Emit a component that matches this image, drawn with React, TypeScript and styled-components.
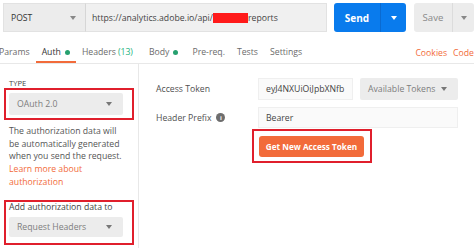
import styled, { createGlobalStyle } from 'styled-components';

const Global = createGlobalStyle`
  html, body {
    margin: 0;
    padding: 0;
    background: #fff;
  }
  * {
    box-sizing: border-box;
  }
`;

const Page = styled.div`
  width: 474px;
  height: 248px;
  overflow: hidden;
  font-family: 'Open Sans', 'Noto Sans', sans-serif;
  font-size: 8.7px;
  color: #505050;
  background: #fff;
`;

const TopBar = styled.div`
  display: flex;
  align-items: stretch;
  height: 32px;
  padding: 3px 0 0 3px;
`;

const MethodSelect = styled.div`
  width: 83px;
  display: flex;
  align-items: center;
  justify-content: space-between;
  padding: 0 9px 0 7px;
  background: #ececec;
  border: 1px solid #e2e2e2;
  border-right: 1px solid #d6d6d6;
  font-size: 8.6px;
  color: #333;
`;

const UrlInput = styled.div`
  width: 241px;
  display: flex;
  align-items: center;
  padding-left: 6px;
  background: #f0f0f0;
  border: 1px solid #e2e2e2;
  border-left: none;
  color: #444;
  white-space: nowrap;
`;

const Redacted = styled.span`
  display: inline-block;
  width: 35px;
  height: 10px;
  background: #ff1a1a;
`;

const SplitButton = styled.div<{ $primary?: boolean; $w: number; $ml: number }>`
  display: flex;
  width: ${(p) => p.$w}px;
  margin-left: ${(p) => p.$ml}px;
  border-radius: 3px;
  overflow: hidden;
  background: ${(p) => (p.$primary ? '#097bed' : '#ececec')};
  color: ${(p) => (p.$primary ? '#fff' : '#8a8a8a')};
  font-weight: ${(p) => (p.$primary ? 700 : 400)};
  font-size: ${(p) => (p.$primary ? 10 : 9.6)}px;
`;

const SplitMain = styled.div<{ $border: string }>`
  flex: 1;
  display: flex;
  align-items: center;
  justify-content: center;
  border-right: 1px solid ${(p) => p.$border};
`;

const SplitCaret = styled.div<{ $w: number }>`
  width: ${(p) => p.$w}px;
  display: flex;
  align-items: center;
  justify-content: center;
`;

const Caret = styled.span<{ $color?: string }>`
  width: 0;
  height: 0;
  border-left: 3px solid transparent;
  border-right: 3px solid transparent;
  border-top: 4px solid ${(p) => p.$color || '#777'};
`;

const Tabs = styled.div`
  display: flex;
  align-items: stretch;
  height: 32px;
  padding-top: 8px;
  border-bottom: 1px solid #e8e8e8;
  color: #6b6b6b;
`;

const Tab = styled.div<{ $active?: boolean; $ml?: number }>`
  display: flex;
  align-items: center;
  gap: 4px;
  padding: 3px 6px 0;
  margin-left: ${(p) => p.$ml || 0}px;
  border-bottom: 2px solid ${(p) => (p.$active ? '#f26b3a' : 'transparent')};
  color: ${(p) => (p.$active ? '#333' : '#6b6b6b')};
  white-space: nowrap;
`;

const Count = styled.span`
  color: #26b47f;
  margin-left: -2px;
`;

const Dot = styled.span`
  width: 5px;
  height: 5px;
  border-radius: 50%;
  background: #26a06f;
`;

const Spacer = styled.div`
  flex: 1;
`;

const TabLink = styled.div<{ $pr: number }>`
  display: flex;
  align-items: center;
  padding: 3px ${(p) => p.$pr}px 0 0;
  color: #f26b3a;
`;

const Body = styled.div`
  display: flex;
  height: 184px;
`;

const Sidebar = styled.div`
  width: 139px;
  flex-shrink: 0;
  border-right: 1px solid #e8e8e8;
  padding: 15px 0 0 4px;
  display: flex;
  flex-direction: column;
`;

const TypeLabel = styled.div`
  font-size: 7.6px;
  color: #444;
  padding-left: 5px;
  line-height: 8px;
  height: 8px;
`;

const RedBox = styled.div<{ $pad: string; $mt: number }>`
  width: 130px;
  margin-top: ${(p) => p.$mt}px;
  padding: ${(p) => p.$pad};
  border: 2px solid #e01f2c;
`;

const Select = styled.div<{ $w?: number; $h?: number }>`
  width: ${(p) => p.$w || 114}px;
  height: ${(p) => p.$h || 22}px;
  background: #ececec;
  display: flex;
  align-items: center;
  justify-content: space-between;
  padding: 0 11px 0 8px;
  color: #7d7d7d;
  border-radius: 2px;
  white-space: nowrap;
`;

const Description = styled.p`
  margin: 5px 0 0 5px;
  line-height: 12.7px;
  color: #555;
  white-space: nowrap;
`;

const OrangeLink = styled.span`
  color: #f26b3a;
`;

const SmallLabel = styled.div`
  color: #444;
  margin: 0 0 4px 0;
  line-height: 11px;
`;

const Main = styled.div`
  flex: 1;
  padding: 14px 0 0 17px;
  display: grid;
  grid-template-columns: 102px 200px;
  grid-auto-rows: min-content;
  row-gap: 7px;
  align-items: center;
`;

const FieldLabel = styled.div`
  display: flex;
  align-items: center;
  gap: 5px;
  color: #505050;
`;

const InfoIcon = styled.span`
  width: 9px;
  height: 9px;
  border-radius: 50%;
  background: #6e6e6e;
  color: #fff;
  font-size: 6px;
  font-weight: 700;
  display: inline-flex;
  align-items: center;
  justify-content: center;
`;

const FieldRow = styled.div`
  display: flex;
  gap: 7px;
`;

const Input = styled.div<{ $w?: number }>`
  width: ${(p) => (p.$w ? `${p.$w}px` : '100%')};
  height: ${(p) => (p.$w ? 22 : 21)}px;
  border: 1px solid #efefef;
  background: #fafafa;
  display: flex;
  align-items: center;
  padding-left: 7px;
  color: #444;
  overflow: hidden;
  white-space: nowrap;
`;

const ButtonCell = styled.div`
  grid-column: 2;
  margin: -6px 0 0 -6px;
`;

const ButtonFrame = styled.div`
  display: inline-block;
  border: 2px solid #e01f2c;
  padding: 5px 6px 4px 5px;
`;

const OrangeButton = styled.div`
  width: 105px;
  height: 21px;
  border-radius: 3px;
  background: #f26b3a;
  color: #fff;
  font-size: 8.2px;
  font-weight: 700;
  display: flex;
  align-items: center;
  justify-content: center;
  white-space: nowrap;
`;

export default function App() {
  return (
    <Page>
      <Global />
      <TopBar>
        <MethodSelect>
          POST
          <Caret $color="#888" />
        </MethodSelect>
        <UrlInput>
          https://analytics.adobe.io/api/<Redacted />reports
        </UrlInput>
        <SplitButton $primary $w={72} $ml={7}>
          <SplitMain $border="#0a6ad0">Send</SplitMain>
          <SplitCaret $w={25}>
            <Caret $color="#fff" />
          </SplitCaret>
        </SplitButton>
        <SplitButton $w={60} $ml={8}>
          <SplitMain $border="#dcdcdc">Save</SplitMain>
          <SplitCaret $w={21}>
            <Caret $color="#888" />
          </SplitCaret>
        </SplitButton>
      </TopBar>

      <Tabs>
        <Tab $ml={-7}>Params</Tab>
        <Tab $active>
          Auth <Dot />
        </Tab>
        <Tab>
          Headers <Count>(13)</Count>
        </Tab>
        <Tab $ml={4}>
          Body <Dot />
        </Tab>
        <Tab $ml={2}>Pre-req.</Tab>
        <Tab>Tests</Tab>
        <Tab>Settings</Tab>
        <Spacer />
        <TabLink $pr={6}>Cookies</TabLink>
        <TabLink $pr={0}>Code</TabLink>
      </Tabs>

      <Body>
        <Sidebar>
          <TypeLabel>TYPE</TypeLabel>
          <RedBox $pad="3px 3px 3px 3px" $mt={1}>
            <Select>
              OAuth 2.0
              <Caret />
            </Select>
          </RedBox>
          <Description>
            The authorization data will
            <br />
            be automatically generated
            <br />
            when you send the request.
            <br />
            <OrangeLink>
              Learn more about
              <br />
              authorization
            </OrangeLink>
          </Description>
          <RedBox $pad="0 3px 6px 3px" $mt={11}>
            <SmallLabel>Add authorization data to</SmallLabel>
            <Select $h={20}>
              Request Headers
              <Caret />
            </Select>
          </RedBox>
        </Sidebar>

        <Main>
          <FieldLabel>Access Token</FieldLabel>
          <FieldRow>
            <Input $w={95}>eyJ4NXUiOiJpbXNfb</Input>
            <Select $w={98} $h={22}>
              Available Tokens
              <Caret />
            </Select>
          </FieldRow>
          <FieldLabel>
            Header Prefix <InfoIcon>i</InfoIcon>
          </FieldLabel>
          <FieldRow>
            <Input>Bearer</Input>
          </FieldRow>
          <ButtonCell>
            <ButtonFrame>
              <OrangeButton>Get New Access Token</OrangeButton>
            </ButtonFrame>
          </ButtonCell>
        </Main>
      </Body>
    </Page>
  );
}
